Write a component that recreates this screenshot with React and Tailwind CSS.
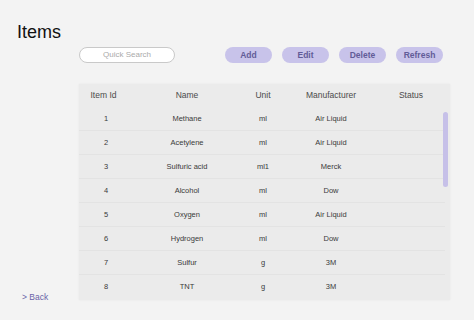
import React from "react";

const rows = [
  ["1", "Methane", "ml", "Air Liquid"],
  ["2", "Acetylene", "ml", "Air Liquid"],
  ["3", "Sulfuric acid", "ml1", "Merck"],
  ["4", "Alcohol", "ml", "Dow"],
  ["5", "Oxygen", "ml", "Air Liquid"],
  ["6", "Hydrogen", "ml", "Dow"],
  ["7", "Sulfur", "g", "3M"],
  ["8", "TNT", "g", "3M"],
];

const cols = "grid grid-cols-[54px_108px_44px_92px_68px]";

export default function App() {
  return (
    <div
      className="w-[474px] h-[320px] bg-[#f3f3f3] overflow-hidden flex flex-col"
      style={{ fontFamily: '"Liberation Sans", Arial, sans-serif' }}
    >
      <div className="pl-[17px] pt-[22px] text-[18px] leading-[20px] text-[#111]">Items</div>
      <div className="flex items-center mt-[5px] h-[16px]">
        <div className="ml-[79px] w-[96px] h-[16px] rounded-full border border-[#c9c9c9] bg-white flex items-center justify-center text-[8px] text-[#aaa]">
          Quick Search
        </div>
        <div className="ml-[50px] flex gap-[10px]">
          {["Add", "Edit", "Delete", "Refresh"].map((b) => (
            <div
              key={b}
              className="w-[47px] h-[16px] rounded-full bg-[#c8c3ea] flex items-center justify-center text-[8.5px] font-bold text-[#625c98]"
            >
              {b}
            </div>
          ))}
        </div>
      </div>
      <div className="flex mt-[21px]">
        <div className="w-[79px] flex items-end pl-[22px]">
          <span className="text-[8.5px] leading-[10px] -mb-[2px] text-[#6a63a8]">&gt; Back</span>
        </div>
        <div className="relative w-[371px] h-[216px] bg-[#ebebeb] shadow-[0_0_2px_rgba(0,0,0,0.06)]">
          <div className={`${cols} h-[23px] items-center text-[8.5px] text-[#4a4a4a]`}>
            <div className="text-center pr-[5px]">Item Id</div>
            <div className="text-center">Name</div>
            <div className="text-center">Unit</div>
            <div className="text-center">Manufacturer</div>
            <div className="text-center">Status</div>
          </div>
          {rows.map((r, i) => (
            <div
              key={i}
              className={`${cols} h-[24px] items-center text-[7.5px] text-[#3a3a3a] w-[366px] ${i < rows.length - 1 ? "border-b border-[#e3e3e3]" : ""}`}
            >
              <div className="text-center">{r[0]}</div>
              <div className="text-center">{r[1]}</div>
              <div className="text-center">{r[2]}</div>
              <div className="text-center">{r[3]}</div>
              <div className="text-center"></div>
            </div>
          ))}
          <div className="absolute right-[2px] top-[28px] w-[5px] h-[75px] rounded-full bg-[#c6c0e8]" />
        </div>
      </div>
    </div>
  );
}
